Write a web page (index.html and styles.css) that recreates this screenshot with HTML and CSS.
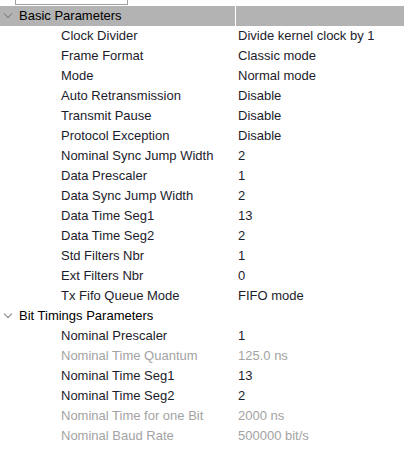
FILE: index.html
```html
<!DOCTYPE html>
<html lang="en">

<head>
  <meta charset="UTF-8">
  <meta name="viewport" content="width=device-width, initial-scale=1.0">
  <title>Parameter Settings</title>
  <link rel="stylesheet" href="styles.css">
</head>

<body>
  <div class="search"></div>
  <div class="grid">
    <div class="group">
      <div class="name"><i class="chev"></i>Basic Parameters</div>
      <div class="val"></div>
    </div>
    <div class="row"><div class="name">Clock Divider</div><div class="val">Divide kernel clock by 1</div></div>
    <div class="row"><div class="name">Frame Format</div><div class="val">Classic mode</div></div>
    <div class="row"><div class="name">Mode</div><div class="val">Normal mode</div></div>
    <div class="row"><div class="name">Auto Retransmission</div><div class="val">Disable</div></div>
    <div class="row"><div class="name">Transmit Pause</div><div class="val">Disable</div></div>
    <div class="row"><div class="name">Protocol Exception</div><div class="val">Disable</div></div>
    <div class="row"><div class="name">Nominal Sync Jump Width</div><div class="val">2</div></div>
    <div class="row"><div class="name">Data Prescaler</div><div class="val">1</div></div>
    <div class="row"><div class="name">Data Sync Jump Width</div><div class="val">2</div></div>
    <div class="row"><div class="name">Data Time Seg1</div><div class="val">13</div></div>
    <div class="row"><div class="name">Data Time Seg2</div><div class="val">2</div></div>
    <div class="row"><div class="name">Std Filters Nbr</div><div class="val">1</div></div>
    <div class="row"><div class="name">Ext Filters Nbr</div><div class="val">0</div></div>
    <div class="row"><div class="name">Tx Fifo Queue Mode</div><div class="val">FIFO mode</div></div>
    <div class="group plain">
      <div class="name"><i class="chev"></i>Bit Timings Parameters</div>
      <div class="val"></div>
    </div>
    <div class="row"><div class="name">Nominal Prescaler</div><div class="val">1</div></div>
    <div class="row off"><div class="name">Nominal Time Quantum</div><div class="val">125.0 ns</div></div>
    <div class="row"><div class="name">Nominal Time Seg1</div><div class="val">13</div></div>
    <div class="row"><div class="name">Nominal Time Seg2</div><div class="val">2</div></div>
    <div class="row off"><div class="name">Nominal Time for one Bit</div><div class="val">2000 ns</div></div>
    <div class="row off"><div class="name">Nominal Baud Rate</div><div class="val">500000 bit/s</div></div>
  </div>
</body>

</html>
```

FILE: styles.css
```css
body {
  margin: 0;
  background: #fff;
  font-family: "Liberation Sans", Arial, sans-serif;
  font-size: 13px;
  color: #1c1c2c;
}

.search {
  width: 111px;
  height: 4px;
  margin-left: 15px;
  margin-bottom: 1px;
  border: 1px solid #a0a0a0;
  border-top: none;
}

.grid .row,
.grid .group {
  display: grid;
  grid-template-columns: 235px 1fr;
  height: 20px;
  line-height: 20px;
}

.row .name {
  padding-left: 61px;
  white-space: nowrap;
}

.row .val {
  padding-left: 3px;
  white-space: nowrap;
}

.row.off {
  color: #a3a3a3;
}

.group {
  background: #b3b3b3;
  color: #000;
}

.group .name {
  display: flex;
  align-items: center;
  padding-left: 4px;
}

.group .val {
  border-left: 1px solid #fff;
}

.group.plain {
  background: none;
}

.group.plain .val {
  border-left: none;
}

.chev {
  width: 5px;
  height: 5px;
  margin: -4px 8px 0 1px;
  border-right: 1px solid #808080;
  border-bottom: 1px solid #808080;
  transform: rotate(45deg);
}
```
